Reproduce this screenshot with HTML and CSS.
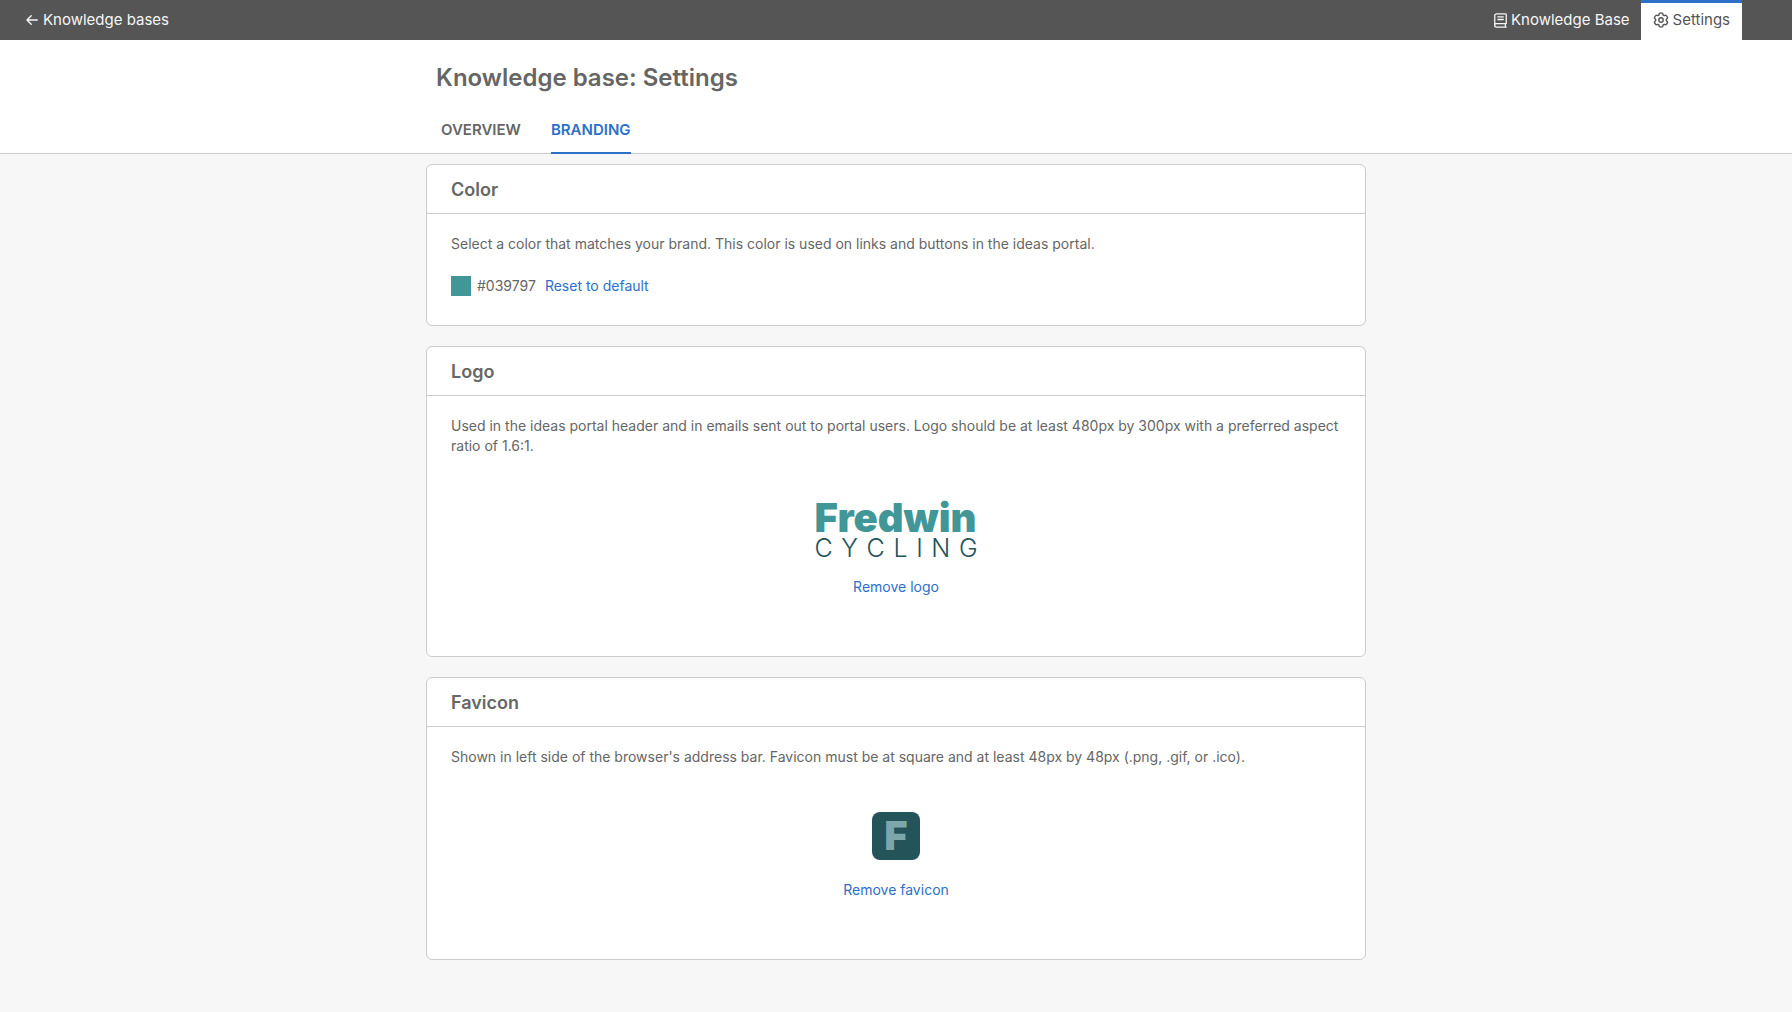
FILE: index.html
```html
<!DOCTYPE html>
<html lang="en">
<head>
<meta charset="utf-8">
<meta name="viewport" content="width=device-width, initial-scale=1">
<title>Knowledge base: Settings</title>
<link rel="stylesheet" href="styles.css">
</head>
<body>
<nav class="topbar">
  <a class="topbar-link" href="#">
    <svg class="arrow" viewBox="0 0 12 12" width="12" height="12" aria-hidden="true"><path d="M11.2 6H1M5.2 1.8L1 6l4.2 4.2"/></svg>
    Knowledge bases
  </a>
  <div class="topbar-tabs">
    <a class="topbar-link topbar-tab" href="#">
      <svg viewBox="0 0 14 16" width="13" height="15" aria-hidden="true"><path d="M13.200 11.400V1.600a.8.8 0 0 0-.8-.8H3A2.200 2.200 0 0 0 .8 3v10A2.200 2.200 0 0 0 3 15.200h10.200M13.200 11.400H2.600a1.900 1.900 0 0 0 0 3.800M12.200 11.400v3.800M4.200 4.200h5.800M4.200 6.900h5.800"/></svg>
      Knowledge Base
    </a>
    <a class="topbar-link topbar-tab active" href="#" aria-current="page">
      <svg viewBox="0 0 16 16" width="16" height="16" aria-hidden="true"><path d="M6.300 1.300Q8 .5 9.700 1.300L10.100 3.100L11.200 3.700L12.900 3.200Q14.400 4.300 14.600 6.100L13.300 7.400V8.600L14.600 9.900Q14.400 11.700 12.900 12.800L11.200 12.300L10.100 12.900L9.700 14.700Q8 15.500 6.300 14.700L5.900 12.900L4.800 12.300L3.100 12.800Q1.600 11.700 1.400 9.900L2.700 8.600V7.400L1.400 6.100Q1.600 4.300 3.100 3.200L4.800 3.700L5.900 3.100Z"/><circle cx="8" cy="8" r="2.200"/></svg>
      Settings
    </a>
  </div>
</nav>

<header class="page-header">
  <div class="page-header-inner">
    <h1>Knowledge base: Settings</h1>
    <nav class="tabs">
      <a class="tab" href="#">OVERVIEW</a>
      <a class="tab selected" href="#" aria-current="page">BRANDING</a>
    </nav>
  </div>
</header>

<main class="content">
  <section class="card">
    <h2>Color</h2>
    <div class="card-body">
      <p>Select a color that matches your brand. This color is used on links and buttons in the ideas portal.</p>
      <div class="color-row">
        <button class="swatch" type="button" aria-label="Brand color"></button>
        <span class="color-value">#039797</span>
        <a href="#">Reset to default</a>
      </div>
    </div>
  </section>

  <section class="card">
    <h2>Logo</h2>
    <div class="card-body">
      <p>Used in the ideas portal header and in emails sent out to portal users. Logo should be at least 480px by 300px with a preferred aspect ratio of 1.6:1.</p>
      <div class="preview">
        <div class="logo">
          <span class="logo-name">Fredwin</span>
          <span class="logo-sub"><span>C</span><span>Y</span><span>C</span><span>L</span><span>I</span><span>N</span><span>G</span></span>
        </div>
        <a href="#">Remove logo</a>
      </div>
    </div>
  </section>

  <section class="card">
    <h2>Favicon</h2>
    <div class="card-body">
      <p>Shown in left side of the browser's address bar. Favicon must be at square and at least 48px by 48px (.png, .gif, or .ico).</p>
      <div class="preview favicon-preview">
        <div class="favicon">F</div>
        <a href="#">Remove favicon</a>
      </div>
    </div>
  </section>
</main>
</body>
</html>
```
FILE: styles.css
```css
* {
  box-sizing: border-box;
}

body {
  margin: 0;
  min-height: 100vh;
  background: #f7f7f7;
  color: #666;
  font: 14px/20px Inter, "Liberation Sans", sans-serif;
}

a {
  color: #2c70c9;
  text-decoration: none;
}

h1,
h2,
p {
  margin: 0;
}

.topbar {
  display: flex;
  justify-content: space-between;
  height: 40px;
  padding: 0 50px 0 26px;
  background: #555;
}

.topbar-tabs {
  display: flex;
}

.topbar-link {
  display: flex;
  align-items: center;
  gap: 5px;
  color: #f6f6f6;
  font-size: 15px;
}

.topbar-link svg {
  fill: none;
  stroke: currentColor;
  stroke-width: 1.4;
  stroke-linejoin: round;
  stroke-linecap: round;
}

.topbar-tab {
  gap: 4px;
  padding: 0 11px;
}

.topbar-tab.active {
  background: #fff;
  color: #555;
  border-top: 3px solid #2c70c9;
  padding: 0 12px 3px;
}

.page-header {
  background: #fff;
  border-bottom: 1px solid #ccc;
}

.page-header-inner {
  max-width: 940px;
  margin: 0 auto;
  padding: 22px 10px 0;
}

h1 {
  font-size: 24px;
  line-height: 32px;
  font-weight: 600;
}

.tabs {
  display: flex;
  gap: 30px;
  margin: 16px 0 -1px;
  padding: 0 5px;
}

.tab {
  padding: 10px 0 12px;
  border-bottom: 2px solid transparent;
  color: #666;
  font-size: 15px;
  font-weight: 600;
}

.tab.selected {
  color: #2c70c9;
  border-color: #2c70c9;
}

.content {
  display: grid;
  gap: 20px;
  max-width: 940px;
  margin: 0 auto;
  padding: 10px 0 50px;
}

.card {
  background: #fff;
  border: 1px solid #ccc;
  border-radius: 6px;
}

h2 {
  padding: 13px 24px 11px;
  border-bottom: 1px solid #ccc;
  font-size: 18px;
  line-height: 24px;
  font-weight: 600;
}

.card-body {
  padding: 20px 24px 29px;
}

.color-row {
  display: flex;
  align-items: center;
  margin-top: 22px;
}

.swatch {
  width: 20px;
  height: 20px;
  padding: 0;
  border: 0;
  background: #419797;
}

.color-value {
  margin: 0 9px 0 6px;
}

.preview {
  display: flex;
  flex-direction: column;
  align-items: center;
  padding: 42px 0 30px;
}

.logo {
  width: 163px;
  margin-bottom: 19px;
}

.logo-name {
  display: block;
  color: #419797;
  font-size: 40px;
  line-height: 40px;
  font-weight: 900;
}

.logo-sub {
  display: flex;
  justify-content: space-between;
  color: #24535a;
  font-size: 25px;
  line-height: 20px;
  font-weight: 300;
}

.favicon-preview {
  padding: 45px 0 30px;
}

.favicon {
  display: flex;
  align-items: center;
  justify-content: center;
  width: 48px;
  height: 48px;
  margin-bottom: 20px;
  border-radius: 8px;
  background: #24535a;
  color: #7ca6a9;
  font-size: 40px;
  line-height: 48px;
  font-weight: 900;
}
```
